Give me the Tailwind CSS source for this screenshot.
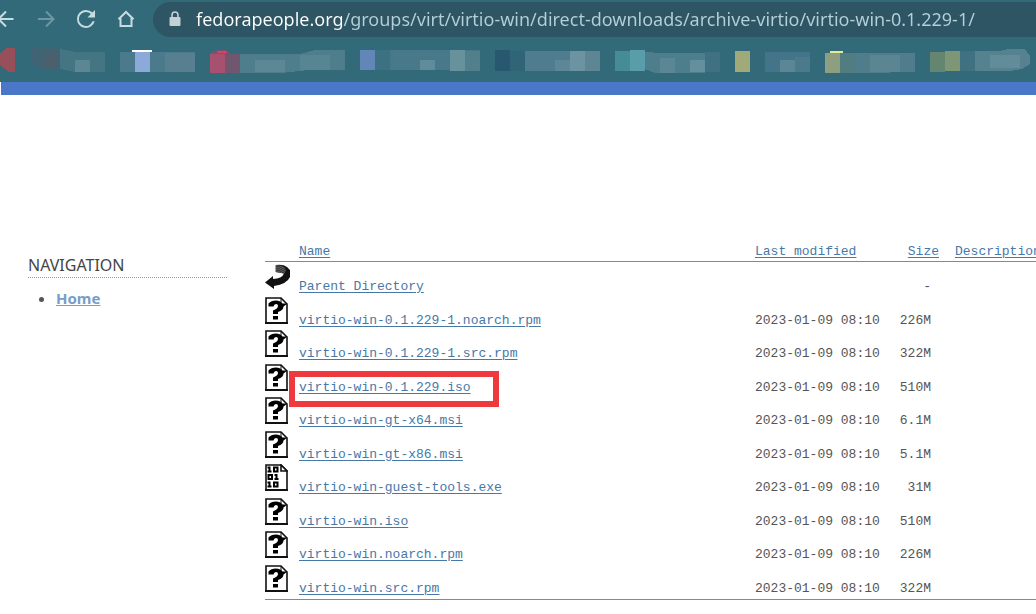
<!DOCTYPE html>
<html lang="en">
<head>
  <meta charset="UTF-8" />
  <meta name="viewport" content="width=device-width, initial-scale=1.0" />
  <title>Index of /groups/virt/virtio-win/direct-downloads/archive-virtio/virtio-win-0.1.229-1</title>
  <script src="https://cdn.jsdelivr.net/npm/@tailwindcss/browser@4"></script>
</head>
<body class="bg-white text-[#555] font-['Noto_Sans',sans-serif] overflow-x-hidden">

<!-- Icon shapes -->
<svg class="hidden">
  <symbol id="icon-unknown" viewBox="0 0 23 27">
    <path d="M1 1H16L22 7V26H1Z" fill="#fff" stroke="#111" stroke-width="1.6" />
    <path d="M0 26H23" stroke="#111" stroke-width="2" />
    <path d="M16 1V7" fill="none" stroke="#111" stroke-width="1" />
    <path d="M3.500 9.500V6.500Q6 3.500 11 3.500Q15 3.500 17.500 6.500H22.500L18.500 9.500Q18.500 13 13 15V17H8V13.500Q13 11.500 13 9Q13 7 11 7Q9 7 8.500 9.500Z" fill="#000" />
    <rect x="8" y="19" width="5" height="3.500" fill="#000" />
  </symbol>
  <symbol id="icon-binary" viewBox="0 0 23 27">
    <path d="M1 1H16L22 7V26H1Z" fill="#fff" stroke="#111" stroke-width="1.6" />
    <path d="M0 26H23" stroke="#111" stroke-width="2" />
    <path d="M16 1V7H22Z" fill="#fff" stroke="#111" stroke-width="1.6" />
    <path d="M2.500 3.500H4.500V7.500M2.500 7.500H6.500M9 3.500H12.500V7.500H9ZM3.500 11H7V15H3.500ZM9.500 11H11.500V15M9.500 15H13.500M2.500 18.500H4.500V22.500M2.500 22.500H6.500M9 18.500H12.500V22.500H9Z" fill="none" stroke="#000" stroke-width="2" />
  </symbol>
  <symbol id="icon-back" viewBox="0 0 26 26">
    <path d="M0 18.500L8 12V15Q17 14.500 19 9.500L11 8V1Q18 0 22 3L25 6V13Q22 20 9 22V25Z" fill="#111" />
    <path d="M10.500 1V8L19 9.500Q22 7 20 4Q17 1 10.500 1Z" fill="#555" />
    <path d="M12 2V8M14 2V8M16 3V9M18 4V9M20 5V10" stroke="#222" stroke-width="1" stroke-dasharray="1 1" />
  </symbol>
</svg>

<!-- Browser toolbar -->
<header class="bg-[#336a79]">
  <div class="flex items-center pt-0.5">
    <nav class="flex w-[153px] shrink-0 gap-4 pb-0.5 text-[#c6dce0]">
      <button aria-label="Back" class="-ml-1.5 w-6 h-6">
        <svg viewBox="0 0 24 24" fill="none" stroke="currentColor" stroke-width="2"><path d="M19.500 12H5M12 4.500L4.500 12L12 19.500" /></svg>
      </button>
      <button aria-label="Forward" class="w-6 h-6 text-[#6d98a3]">
        <svg viewBox="0 0 24 24" fill="none" stroke="currentColor" stroke-width="2"><path d="M4 12H18.500M12 4.500L19.500 12L12 19.500" /></svg>
      </button>
      <button aria-label="Reload" class="w-6 h-6">
        <svg viewBox="0 0 24 24" fill="currentColor"><path d="M18.400 5.600A9 9 0 0 0 12 3a9 9 0 1 0 8.700 11.300h-2.200A7 7 0 1 1 12 5c1.900 0 3.600.8 4.900 2.100L13.500 10.500H21V3z" /></svg>
      </button>
      <button aria-label="Home" class="w-6 h-6">
        <svg viewBox="0 0 24 24" fill="none" stroke="currentColor" stroke-width="2"><path d="M4.500 12.200L12 5L19.500 12.200M6.500 11V19H17.500V11" /></svg>
      </button>
    </nav>
    <div class="flex flex-1 items-center h-[35px] pl-4 pb-0.5 rounded-l-full bg-[#2d5564]">
      <svg class="w-3 h-4 shrink-0" viewBox="0 0 12 16"><path d="M3 6V4a3 3 0 0 1 6 0V6" fill="none" stroke="#c3d0d4" stroke-width="1.600" /><rect x="0.500" y="6" width="11" height="9" rx="1" fill="#c3d0d4" /></svg>
      <input aria-label="Address" type="text" spellcheck="false" value="fedorapeople.org/groups/virt/virtio-win/direct-downloads/archive-virtio/virtio-win-0.1.229-1/"
        class="flex-1 min-w-0 ml-[15px] h-8 text-[18px] outline-none text-transparent bg-clip-text bg-[linear-gradient(90deg,#fff_147px,#b5d0d8_147px)]" />
    </div>
  </div>

  <!-- Bookmarks, pixelated -->
  <svg class="block w-[1036px] h-[45px]" viewBox="0 37 1036 45" shape-rendering="crispEdges">
    <path d="M0 53L7 48H15V72H9L0 65Z" fill="#974f59" />
    <path d="M31 48H60V70H45L31 64Z" fill="#416475" />
    <rect x="45" y="54" width="12" height="14" fill="#4d5e6c" />
    <path d="M60 49L75 52H105V72H75L60 69Z" fill="#447583" />
    <rect x="75" y="60" width="15" height="12" fill="#5b8793" />
    <rect x="120" y="52" width="75" height="20" fill="#4a7a8b" />
    <rect x="132" y="50" width="20" height="2" fill="#fff" />
    <rect x="135" y="52" width="15" height="20" fill="#8caad9" />
    <rect x="165" y="53" width="30" height="19" fill="#577f8f" />
    <path d="M210 53L217 50H226L230 54H240V73H210Z" fill="#70576f" />
    <rect x="210" y="54" width="15" height="19" fill="#a8506f" />
    <path d="M216 53Q222 48 228 53Z" fill="#d64468" />
    <path d="M240 54H300L315 50H345V70H308L282 73H240Z" fill="#4e7d8b" />
    <rect x="255" y="60" width="30" height="12" fill="#5c8794" />
    <rect x="300" y="55" width="30" height="15" fill="#588592" />
    <rect x="360" y="50" width="15" height="20" fill="#6386b8" />
    <rect x="375" y="50" width="15" height="20" fill="#3c7083" />
    <rect x="390" y="50" width="90" height="20" fill="#48798a" />
    <rect x="420" y="60" width="15" height="10" fill="#608c9a" />
    <rect x="450" y="50" width="15" height="21" fill="#67919b" />
    <rect x="465" y="51" width="15" height="20" fill="#527f8c" />
    <rect x="495" y="50" width="15" height="21" fill="#285870" />
    <rect x="510" y="51" width="15" height="20" fill="#306578" />
    <rect x="525" y="51" width="75" height="20" fill="#4f7d8f" />
    <rect x="555" y="60" width="15" height="11" fill="#5d8796" />
    <rect x="570" y="51" width="15" height="20" fill="#6c939f" />
    <rect x="585" y="51" width="15" height="20" fill="#5d8594" />
    <rect x="615" y="51" width="15" height="20" fill="#468c96" />
    <rect x="630" y="50" width="15" height="21" fill="#599dab" />
    <path d="M645 52L660 53H705V73H655L645 69Z" fill="#4d7e8c" />
    <rect x="660" y="58" width="15" height="15" fill="#5b8794" />
    <rect x="690" y="60" width="15" height="12" fill="#648f9c" />
    <rect x="705" y="52" width="15" height="20" fill="#3f7182" />
    <rect x="735" y="51" width="15" height="21" fill="#a0a978" />
    <rect x="765" y="52" width="45" height="20" fill="#44748a" />
    <rect x="780" y="60" width="15" height="12" fill="#5c8695" />
    <rect x="795" y="57" width="15" height="15" fill="#4b7b8b" />
    <rect x="825" y="53" width="15" height="20" fill="#8d9f80" />
    <rect x="830" y="51" width="13" height="2" fill="#e4ec91" />
    <rect x="840" y="53" width="15" height="20" fill="#517c80" />
    <path d="M855 53H915V72H895L885 73H855Z" fill="#4f7d8c" />
    <rect x="870" y="55" width="30" height="17" fill="#5a8591" />
    <rect x="930" y="52" width="15" height="20" fill="#64856f" />
    <rect x="945" y="51" width="15" height="20" fill="#7d9675" />
    <rect x="960" y="51" width="15" height="20" fill="#3f7181" />
    <path d="M975 51H1000L1008 49H1025L1030 56V64L1022 69L1010 71H975Z" fill="#56818f" />
    <rect x="990" y="55" width="30" height="13" fill="#628c99" />
  </svg>
</header>

<!-- Site banner -->
<div class="ml-px h-[13px] bg-[#4b77c9]"></div>

<div class="flex pt-[148px]">
  <!-- Navigation -->
  <aside class="w-[265px] shrink-0 pl-7 pt-2.5">
    <h2 class="w-[199px] h-[25px] text-base leading-6 border-b border-dotted border-[#999] text-[#444]">NAVIGATION</h2>
    <ul class="mt-2 pl-7 list-disc text-[15px] leading-6">
      <li><a href="#" class="font-bold underline text-[#7a9cc8]">Home</a></li>
    </ul>
  </aside>

  <!-- Directory listing -->
  <main class="flex-1 min-w-0 overflow-hidden">
    <table class="w-full table-fixed text-left whitespace-nowrap font-['Liberation_Mono',monospace] text-[13px] [&_a]:text-[#4778a8] [&_a]:underline [&_a]:underline-offset-2">
      <colgroup>
        <col class="w-[34px]" />
        <col class="w-[456px]" />
        <col class="w-[140px]" />
        <col class="w-[60px]" />
        <col />
      </colgroup>
      <thead class="border-b border-[#888] leading-[18px] [&_th]:font-normal [&_th]:p-0">
        <tr>
          <th></th>
          <th><a href="#">Name</a></th>
          <th><a href="#">Last modified</a></th>
          <th><div class="pr-4 text-right"><a href="#">Size</a></div></th>
          <th><a href="#">Description</a></th>
        </tr>
      </thead>
      <tbody class="leading-[14px] [&_td]:p-0 [&_td]:align-bottom">
        <tr class="h-8">
          <td><svg class="w-[26px] h-[26px] mb-1"><use href="#icon-back" /></svg></td>
          <td><a href="#">Parent Directory</a></td>
          <td></td>
          <td><div class="pr-6 text-right">-</div></td>
          <td></td>
        </tr>
        <tr class="h-[34px]">
          <td><svg class="w-[23px] h-[27px] mb-1"><use href="#icon-unknown" /></svg></td>
          <td><a href="#">virtio-win-0.1.229-1.noarch.rpm</a></td>
          <td>2023-01-09 08:10</td>
          <td><div class="pr-6 text-right">226M</div></td>
          <td></td>
        </tr>
        <tr class="h-[33px]">
          <td><svg class="w-[23px] h-[27px] mb-1"><use href="#icon-unknown" /></svg></td>
          <td><a href="#">virtio-win-0.1.229-1.src.rpm</a></td>
          <td>2023-01-09 08:10</td>
          <td><div class="pr-6 text-right">322M</div></td>
          <td></td>
        </tr>
        <tr class="h-[34px]">
          <td><svg class="w-[23px] h-[27px] mb-1"><use href="#icon-unknown" /></svg></td>
          <td>
            <div class="relative">
              <a href="#">virtio-win-0.1.229.iso</a>
              <span class="absolute -left-2.5 -top-2.5 w-[210px] h-9 border-6 border-[#ee393f] pointer-events-none"></span>
            </div>
          </td>
          <td>2023-01-09 08:10</td>
          <td><div class="pr-6 text-right">510M</div></td>
          <td></td>
        </tr>
        <tr class="h-[33px]">
          <td><svg class="w-[23px] h-[27px] mb-1"><use href="#icon-unknown" /></svg></td>
          <td><a href="#">virtio-win-gt-x64.msi</a></td>
          <td>2023-01-09 08:10</td>
          <td><div class="pr-6 text-right">6.1M</div></td>
          <td></td>
        </tr>
        <tr class="h-[34px]">
          <td><svg class="w-[23px] h-[27px] mb-1"><use href="#icon-unknown" /></svg></td>
          <td><a href="#">virtio-win-gt-x86.msi</a></td>
          <td>2023-01-09 08:10</td>
          <td><div class="pr-6 text-right">5.1M</div></td>
          <td></td>
        </tr>
        <tr class="h-[33px]">
          <td><svg class="w-[23px] h-[27px] mb-1"><use href="#icon-binary" /></svg></td>
          <td><a href="#">virtio-win-guest-tools.exe</a></td>
          <td>2023-01-09 08:10</td>
          <td><div class="pr-6 text-right">31M</div></td>
          <td></td>
        </tr>
        <tr class="h-[34px]">
          <td><svg class="w-[23px] h-[27px] mb-1"><use href="#icon-unknown" /></svg></td>
          <td><a href="#">virtio-win.iso</a></td>
          <td>2023-01-09 08:10</td>
          <td><div class="pr-6 text-right">510M</div></td>
          <td></td>
        </tr>
        <tr class="h-[33px]">
          <td><svg class="w-[23px] h-[27px] mb-1"><use href="#icon-unknown" /></svg></td>
          <td><a href="#">virtio-win.noarch.rpm</a></td>
          <td>2023-01-09 08:10</td>
          <td><div class="pr-6 text-right">226M</div></td>
          <td></td>
        </tr>
        <tr class="h-[34px]">
          <td><svg class="w-[23px] h-[27px] mb-1"><use href="#icon-unknown" /></svg></td>
          <td><a href="#">virtio-win.src.rpm</a></td>
          <td>2023-01-09 08:10</td>
          <td><div class="pr-6 text-right">322M</div></td>
          <td></td>
        </tr>
      </tbody>
    </table>
    <hr class="mt-[3px] border-[#888]" />
  </main>
</div>

</body>
</html>
